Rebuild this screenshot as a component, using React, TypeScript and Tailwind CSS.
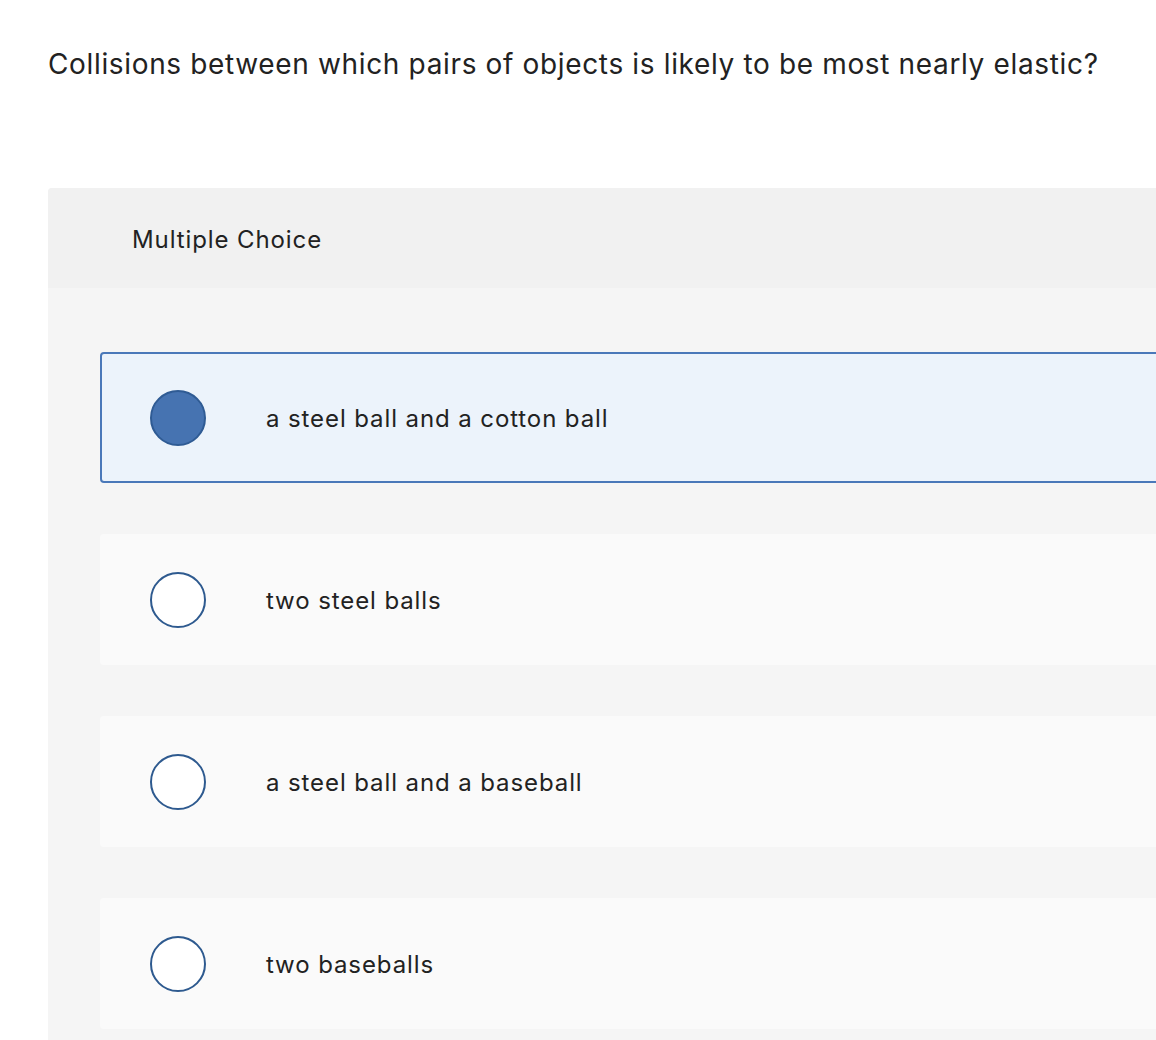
const options = [
  { label: 'a steel ball and a cotton ball', selected: true },
  { label: 'two steel balls', selected: false },
  { label: 'a steel ball and a baseball', selected: false },
  { label: 'two baseballs', selected: false },
]

function Radio({ selected }: { selected: boolean }) {
  return (
    <span
      className={
        selected
          ? 'size-[56px] shrink-0 rounded-full border-2 border-[#2f5b94] bg-[#4673b1]'
          : 'size-[56px] shrink-0 rounded-full border-2 border-[#2e5a8f] bg-white'
      }
    />
  )
}

export default function App() {
  return (
    <div
      className="h-[1040px] w-full overflow-hidden bg-white text-[#222]"
      style={{ fontFamily: 'Inter, "Open Sans", sans-serif' }}
    >
      <h1 className="px-12 pt-[44px] text-[28px] leading-[40px] tracking-[0.65px]">
        Collisions between which pairs of objects is likely to be most nearly elastic?
      </h1>

      <div className="ml-12 mt-[104px] w-[1200px] rounded-tl bg-[#f5f5f5]">
        <div className="flex h-[100px] items-center rounded-tl bg-[#f1f1f1] pl-[84px] pt-1 text-[24px] tracking-[0.9px]">
          Multiple Choice
        </div>

        <ul className="flex flex-col gap-[51px] pb-10 pl-[52px] pt-16">
          {options.map((o) => (
            <li
              key={o.label}
              className={
                o.selected
                  ? 'flex h-[131px] items-center gap-[60px] rounded border-2 border-[#4a78b9] bg-[#ecf3fb] pl-[48px] text-[24px] tracking-[0.9px]'
                  : 'flex h-[131px] items-center gap-[60px] rounded border-2 border-transparent bg-[#fafafa] pl-[48px] text-[24px] tracking-[0.9px]'
              }
            >
              <Radio selected={o.selected} />
              <span className="pt-0.5">{o.label}</span>
            </li>
          ))}
        </ul>
      </div>
    </div>
  )
}
